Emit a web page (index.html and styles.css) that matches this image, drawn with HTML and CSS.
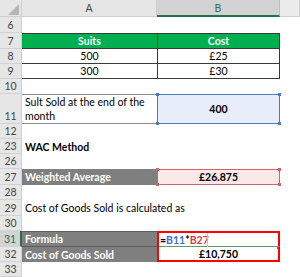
FILE: index.html
```html
<!DOCTYPE html>
<html>
<head>
<meta charset="utf-8">
<link rel="stylesheet" href="styles.css">
</head>
<body>
<div class="sheet">
  <div class="hdr">
    <div class="corner"><svg width="22" height="17" viewBox="0 0 22 17"><polygon points="19,4 19,15 8,15" fill="#b6b6b6"/></svg></div>
    <div class="ch cha">A</div>
    <div class="ch chb">B</div>
    <div class="ch chr"></div>
  </div>

  <div class="row h16"><div class="rh">6</div><div class="ca"></div><div class="cb"></div><div class="rest"></div></div>
  <div class="row h16 t tt green"><div class="rh">7</div><div class="ca c">Suits</div><div class="cb">Cost</div><div class="rest"></div></div>
  <div class="row h15 t"><div class="rh">8</div><div class="ca c">500</div><div class="cb">£25</div><div class="rest"></div></div>
  <div class="row h15 t"><div class="rh">9</div><div class="ca c">300</div><div class="cb">£30</div><div class="rest"></div></div>
  <div class="row h15"><div class="rh">10</div><div class="ca"></div><div class="cb"></div><div class="rest"></div></div>
  <div class="row h30"><div class="rh bot">11</div><div class="ca wrap">Sult Sold at the end of the month</div><div class="cb ref blue bold">400<i class="sq tl"></i><i class="sq tr"></i><i class="sq bl"></i><i class="sq br"></i></div><div class="rest"></div></div>
  <div class="row h15"><div class="rh">12</div><div class="ca"></div><div class="cb"></div><div class="rest"></div></div>
  <div class="row h15"><div class="rh">23</div><div class="ca bold">WAC Method</div><div class="cb"></div><div class="rest"></div></div>
  <div class="row h15"><div class="rh">26</div><div class="ca"></div><div class="cb"></div><div class="rest"></div></div>
  <div class="row h16"><div class="rh">27</div><div class="ca dark">Weighted Average</div><div class="cb ref red bold">£26.875<i class="sq tl"></i><i class="sq tr"></i><i class="sq bl"></i><i class="sq br"></i></div><div class="rest"></div></div>
  <div class="row h15"><div class="rh">28</div><div class="ca"></div><div class="cb"></div><div class="rest"></div></div>
  <div class="row h16"><div class="rh">29</div><div class="ca over">Cost of Goods Sold is calculated as</div><div class="cb"></div><div class="rest"></div></div>
  <div class="row h15"><div class="rh">30</div><div class="ca"></div><div class="cb"></div><div class="rest"></div></div>
  <div class="row h16"><div class="rh sel">31</div><div class="ca dark dtop">Formula</div><div class="cb edit bold"><span class="ftxt">=<span class="fb">B11</span>*<span class="fr">B27</span></span><i class="caretbox"></i><i class="handle"></i></div><div class="rest"></div></div>
  <div class="row h15"><div class="rh">32</div><div class="ca dark">Cost of Goods Sold</div><div class="cb box2 bold">£10,750</div><div class="rest"></div></div>
  <div class="row h15"><div class="rh">33</div><div class="ca"></div><div class="cb"></div><div class="rest"></div></div>
</div>
</body>
</html>
```

FILE: styles.css
```css
html, body {
  margin: 0;
  padding: 0;
  background: #fff;
}
body {
  font-family: Lato, "Liberation Sans", sans-serif;
  font-size: 10.5px;
  color: #000;
}
.sheet {
  width: 300px;
  height: 277px;
  overflow: hidden;
}
.hdr {
  display: flex;
  height: 17px;
}
.corner {
  width: 22px;
  height: 17px;
  flex: none;
  background: #e6e6e6;
  box-sizing: border-box;
  border-bottom: 1px solid #cfcfcf;
  border-right: 1px solid #cfcfcf;
}
.corner svg { display: block; }
.ch {
  height: 17px;
  box-sizing: border-box;
  display: flex;
  align-items: center;
  justify-content: center;
  background: #e6e6e6;
  color: #444;
  border-bottom: 1px solid #cfcfcf;
  border-right: 1px solid #cfcfcf;
  flex: none;
}
.cha { width: 135px; }
.chb {
  width: 123px;
  background: #d3d3d3;
  color: #3d6b52;
  border-bottom: 2px solid #217346;
  border-right: 1px solid #bdbdbd;
}
.chr { flex: 1; background: #ececec; }

.row {
  display: flex;
}
.h15 { height: 15px; }
.h16 { height: 16px; }
.h30 { height: 30px; }

.rh {
  width: 22px;
  flex: none;
  box-sizing: border-box;
  background: #e6e6e6;
  color: #444;
  border-bottom: 1px solid #d2d2d2;
  border-right: 1px solid #cfcfcf;
  display: flex;
  align-items: center;
  justify-content: center;
}
.rh.bot { align-items: flex-end; padding-bottom: 1px; }
.rh.sel {
  background: #d3d3d3;
  color: #217346;
  border-right: 2px solid #217346;
}
.ca {
  width: 135px;
  flex: none;
  box-sizing: border-box;
  display: flex;
  align-items: center;
  padding-left: 3px;
  white-space: nowrap;
}
.cb {
  width: 123px;
  flex: none;
  box-sizing: border-box;
  display: flex;
  align-items: center;
  justify-content: center;
  position: relative;
}
.rest { flex: 1; }
.c { justify-content: center; padding-left: 0; }
.bold { font-weight: 700; }
.over { overflow: visible; position: relative; z-index: 2; }

/* table rows 7-9 */
.t .ca, .t .cb {
  border-bottom: 1px solid #3a3a3a;
}
.t .cb {
  border-left: 1px solid #3a3a3a;
  border-right: 1px solid #3a3a3a;
}
.tt .ca, .tt .cb { border-top: 1px solid #3a3a3a; }
.green .ca, .green .cb {
  background: #00b050;
  color: #fff;
  font-weight: 700;
}

.wrap {
  white-space: normal;
  align-items: flex-end;
  line-height: 14px;
  padding-bottom: 0;
  border-top: 1px solid #8c8c8c;
  border-bottom: 1px solid #8c8c8c;
}

.ref { border: 1px solid; }
.blue { background: #e8eef9; border-color: #4a78c8; }
.red { background: #fbe9ea; border-color: #d3636b; }
.sq {
  position: absolute;
  width: 3px;
  height: 3px;
}
.blue .sq { background: #4a78c8; }
.red .sq { background: #d3636b; }
.sq.tl { left: -2px; top: -2px; }
.sq.tr { right: -2px; top: -2px; }
.sq.bl { left: -2px; bottom: -2px; }
.sq.br { right: -2px; bottom: -2px; }

.dark {
  background: #7f7f7f;
  color: #fff;
  font-weight: 700;
}
.dtop { border-top: 1px solid #5c5c5c; border-bottom: 1px solid #5c5c5c; }

.edit {
  justify-content: flex-start;
  padding-left: 1px;
  border: 2px solid #ff0000;
  border-bottom: 0;
  box-shadow: inset 0 -1px 0 #5a9a6a;
}
.ftxt { line-height: 13px; }
.fb { color: #3b6fd0; }
.fr { color: #d04048; }
.caretbox {
  position: absolute;
  left: 48px;
  top: 0;
  bottom: 0;
  width: 1px;
  background: #c4c4c4;
}
.handle {
  position: absolute;
  right: -2px;
  bottom: -2px;
  width: 3px;
  height: 3px;
  background: #5a9a6a;
}
.box2 {
  border: 2px solid #ff0000;
  border-top: 0;
}
```
